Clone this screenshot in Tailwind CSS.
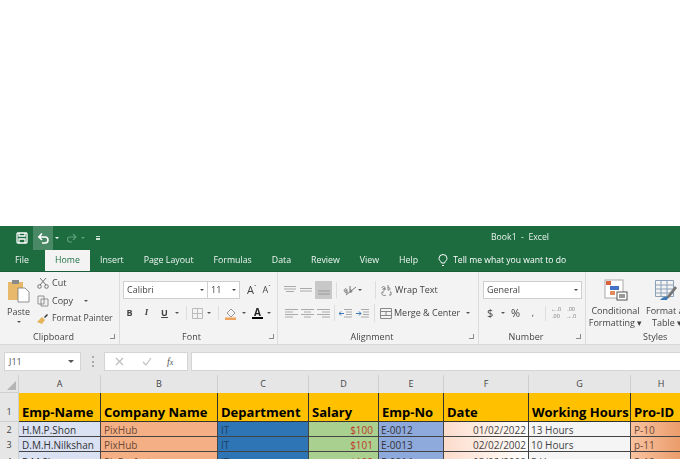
<!DOCTYPE html>
<html><head><meta charset="utf-8"><script src="https://cdn.jsdelivr.net/npm/@tailwindcss/browser@4"></script></head>
<body class="bg-white overflow-hidden">
<div class="w-[680px] h-[459px] overflow-hidden flex flex-col font-['Open_Sans',sans-serif] text-[9px] text-[#444] blur-[0.4px]">
  <div class="h-[226px] shrink-0 bg-white"></div>
  <!-- title bar -->
  <div class="h-[24px] shrink-0 bg-[#1d6c40] flex items-center text-white relative">
    <svg class="ml-[16px] w-[12px] h-[12px]" viewBox="0 0 12 12" fill="none" stroke="#fff" stroke-width="1.3"><rect x="1" y="1" width="10" height="10" rx="1"/><path d="M3 1v3h6V1M3 11V7h6v4"/></svg>
    <div class="ml-[5px] w-[20px] h-[24px] bg-white/20 flex items-center justify-center">
      <svg class="w-[13px] h-[12px]" viewBox="0 0 13 12" fill="none" stroke="#fff" stroke-width="1.6"><path d="M2 5h6a3 3 0 0 1 0 6H5M5 1.5 1.8 5 5 8"/></svg>
    </div>
    <span class="ml-[2px] w-0 h-0 border-x-[2px] border-x-transparent border-t-[2px] border-t-white"></span>
    <svg class="ml-[7px] w-[11px] h-[10px]" viewBox="0 0 11 10" fill="none" stroke="#5f9f7d" stroke-width="1.1"><path d="M9 4H4a2.5 2.5 0 0 0 0 5h2M7 1l3 3-3 3"/></svg>
    <span class="ml-[4px] w-0 h-0 border-x-[2px] border-x-transparent border-t-[2px] border-t-[#5f9f7d]"></span>
    <span class="ml-[11px] w-[4px] h-[4px] border-t border-b-2 border-[#cfe3d8]"></span>
    <span class="ml-[391px] text-[8.7px] text-[#eaf3ee] whitespace-nowrap">Book1&nbsp; -&nbsp; Excel</span>
  </div>
  <!-- tabs -->
  <div class="h-[22px] shrink-0 bg-[#1d6c40] flex items-end text-[#eef5f1] border-b border-[#1a5c38] text-[8.8px]">
    <span class="ml-[15px] h-[21px] leading-[21px]">File</span>
    <span class="ml-[16px] w-[45px] h-[22px] leading-[22px] bg-[#f3f3f3] text-[#217346] text-center">Home</span>
    <span class="ml-[10px] h-[21px] leading-[21px]">Insert</span>
    <span class="ml-[20px] h-[21px] leading-[21px]">Page Layout</span>
    <span class="ml-[20px] h-[21px] leading-[21px]">Formulas</span>
    <span class="ml-[20px] h-[21px] leading-[21px]">Data</span>
    <span class="ml-[20px] h-[21px] leading-[21px]">Review</span>
    <span class="ml-[20px] h-[21px] leading-[21px]">View</span>
    <span class="ml-[20px] h-[21px] leading-[21px]">Help</span>
    <svg class="ml-[20px] mb-[4px] w-[10px] h-[13px]" viewBox="0 0 10 13" fill="none" stroke="#fff" stroke-width="1"><path d="M3.5 9C3 7 1 6.500 1 4.500a4 4 0 0 1 8 0C9 6.500 7 7 6.500 9zM4 11.500h2"/></svg>
    <span class="ml-[5px] h-[21px] leading-[21px] text-white whitespace-nowrap text-[8.6px]">Tell me what you want to do</span>
  </div>
  <!-- ribbon -->
  <div class="h-[72px] shrink-0 bg-[#f3f3f3] flex">
    <!-- Clipboard -->
    <div class="w-[120px] shrink-0 border-r border-[#dcdcdc] flex flex-col">
      <div class="h-[58px] flex">
        <div class="w-[37px] flex flex-col items-center pt-[7px]">
          <svg class="w-[24px] h-[24px]" viewBox="0 0 24 24"><rect x="1" y="3" width="15" height="18" fill="#e8b96a"/><rect x="5" y="1" width="7" height="4" fill="#8a8a8a"/><path d="M11 9h7l4 4v10H11z" fill="#fff" stroke="#777" stroke-width=".8"/></svg>
          <span class="mt-[3px] leading-[12px]">Paste</span>
          <span class="mt-[3px] w-0 h-0 border-x-[2px] border-x-transparent border-t-[2px] border-t-[#555]"></span>
        </div>
        <div class="flex flex-col pt-[2px]">
          <div class="flex items-center h-[18px]"><svg class="w-[12px] h-[12px]" viewBox="0 0 12 12" fill="none" stroke="#666" stroke-width=".9"><path d="M3 1l6 7M9 1 3 8"/><circle cx="2.500" cy="9.500" r="1.800"/><circle cx="9.500" cy="9.500" r="1.800"/></svg><span class="ml-[3px]">Cut</span></div>
          <div class="flex items-center h-[18px]"><svg class="w-[12px] h-[12px]" viewBox="0 0 12 12" fill="none" stroke="#888" stroke-width=".9"><path d="M1 1h6v8H1zM4 4h7v7H4z"/></svg><span class="ml-[3px]">Copy</span><span class="ml-[11px] w-0 h-0 border-x-[2px] border-x-transparent border-t-[2px] border-t-[#555]"></span></div>
          <div class="flex items-center h-[18px]"><svg class="w-[12px] h-[12px]" viewBox="0 0 12 12"><path d="M0 9 5 4l3 3-3 4z" fill="#e3b45a"/><path d="M7 4l3-3 1 1-3 3z" fill="#333"/></svg><span class="ml-[3px] whitespace-nowrap text-[8.7px]">Format Painter</span></div>
        </div>
      </div>
      <div class="relative flex-1 text-center leading-[14px] pr-[12px]">Clipboard<span class="absolute right-[4px] top-[4px] w-[5px] h-[5px] border-r border-b border-[#888]"></span></div>
    </div>
    <!-- Font -->
    <div class="w-[158px] shrink-0 border-r border-[#dcdcdc] flex flex-col">
      <div class="h-[58px] pl-[3px] pt-[9px]">
        <div class="flex items-center h-[18px]">
          <div class="w-[85px] h-[18px] bg-white border border-[#cfcfcf] flex items-center justify-between px-[3px]"><span>Calibri</span><span class="w-0 h-0 border-x-[2px] border-x-transparent border-t-[2px] border-t-[#444]"></span></div>
          <div class="w-[32px] h-[18px] bg-white border border-l-0 border-[#cfcfcf] flex items-center justify-between px-[3px]"><span>11</span><span class="w-0 h-0 border-x-[2px] border-x-transparent border-t-[2px] border-t-[#444]"></span></div>
          <span class="ml-[7px] text-[11px]">A</span><span class="text-[6px] -mt-[6px]">ˆ</span>
          <span class="ml-[6px] text-[9px]">A</span><span class="text-[6px] -mt-[6px]">ˇ</span>
        </div>
        <div class="flex items-center h-[18px] mt-[5px] font-bold text-[#444]">
          <span class="w-[13px] text-center">B</span>
          <span class="ml-[2px] w-[17px] text-center italic font-['Liberation_Serif']">I</span>
          <span class="ml-[2px] w-[15px] text-center underline">U</span>
          <span class="w-0 h-0 ml-[3px] border-x-[2px] border-x-transparent border-t-[2px] border-t-[#555]"></span>
          <span class="ml-[7px] w-px h-[14px] bg-[#ddd]"></span>
          <svg class="ml-[5px] w-[11px] h-[11px]" viewBox="0 0 11 11" fill="none" stroke="#bbb"><path d="M.5.500h10v10H.5zM5.500.500v10M.5 5.500h10"/></svg>
          <span class="w-0 h-0 ml-[4px] border-x-[2px] border-x-transparent border-t-[2px] border-t-[#555]"></span>
          <span class="ml-[7px] w-px h-[14px] bg-[#ddd]"></span>
          <svg class="ml-[6px] w-[12px] h-[13px]" viewBox="0 0 12 13"><path d="M2 6l4-4 4 4-4 4z" fill="none" stroke="#999"/><rect x="0" y="10.500" width="11" height="2.500" fill="#f0a35a"/></svg>
          <span class="w-0 h-0 ml-[5px] border-x-[2px] border-x-transparent border-t-[2px] border-t-[#555]"></span>
          <div class="ml-[6px] w-[11px] flex flex-col items-center leading-[9px] text-[#222] text-[10px]">A<span class="w-[11px] h-[2px] bg-black"></span></div>
          <span class="w-0 h-0 ml-[4px] border-x-[2px] border-x-transparent border-t-[2px] border-t-[#555]"></span>
        </div>
      </div>
      <div class="relative flex-1 text-center leading-[14px] pr-[14px]">Font<span class="absolute right-[3px] top-[4px] w-[5px] h-[5px] border-r border-b border-[#888]"></span></div>
    </div>
    <!-- Alignment -->
    <div class="w-[201px] shrink-0 border-r border-[#dcdcdc] flex flex-col">
      <div class="h-[58px] pl-[6px] pt-[9px]">
        <div class="flex items-center h-[18px]">
          <svg class="w-[12px] h-[8px]" viewBox="0 0 12 8" stroke="#aaa"><path d="M0 .5h12M0 3h12M2 5.500h8"/></svg>
          <svg class="ml-[4px] w-[12px] h-[8px]" viewBox="0 0 12 8" stroke="#aaa"><path d="M0 2.500h12M0 5h12"/></svg>
          <div class="ml-[3px] w-[17px] h-[18px] bg-[#c8c8c8] flex items-end justify-center pb-[3px]"><svg class="w-[12px] h-[6px]" viewBox="0 0 12 6" stroke="#999"><path d="M0 1h12M0 4h12"/></svg></div>
          <span class="ml-[4px] w-px h-[16px] bg-[#ddd]"></span>
          <svg class="ml-[6px] w-[14px] h-[11px]" viewBox="0 0 14 11" fill="none" stroke="#777"><path d="M1 6c1-3 3-3 3 0v2M4 6c-3-1-3 2 0 2M7 1v6c2 2 3-3 0-2M3 10 13 2"/></svg>
          <span class="w-0 h-0 ml-[1px] border-x-[2px] border-x-transparent border-t-[2px] border-t-[#555]"></span>
          <span class="ml-[13px] w-px h-[18px] bg-[#ddd]"></span>
          <svg class="ml-[5px] w-[12px] h-[13px]" viewBox="0 0 12 13" fill="none" stroke="#777" stroke-width=".9"><path d="M1 4c0-2 3-2 3 0v2M4 4.500c-3-.5-3 2 0 1.500M7 1v5c2 1.500 3-3 0-2.500M3 8H1c-1 4 3 4 4 3M9 8h1v3l-2 0"/></svg>
          <span class="ml-[2px] whitespace-nowrap">Wrap Text</span>
        </div>
        <div class="flex items-center h-[18px] mt-[5px]">
          <svg class="ml-[1px] w-[13px] h-[9px]" viewBox="0 0 13 9" stroke="#aaa"><path d="M0 .5h13M0 3h8M0 5.500h13M0 8h8"/></svg>
          <svg class="ml-[3px] w-[13px] h-[9px]" viewBox="0 0 13 9" stroke="#aaa"><path d="M0 .5h13M3 3h7M0 5.500h13M3 8h7"/></svg>
          <svg class="ml-[3px] w-[13px] h-[9px]" viewBox="0 0 13 9" stroke="#aaa"><path d="M0 .5h13M5 3h8M0 5.500h13M5 8h8"/></svg>
          <span class="ml-[4px] w-px h-[16px] bg-[#ddd]"></span>
          <svg class="ml-[4px] w-[13px] h-[9px]" viewBox="0 0 13 9" fill="none"><path d="M5 .5h8M7 3h6M7 5.500h6M5 8h8" stroke="#aaa"/><path d="M5 4.500H0M2 2.500 0 4.500l2 2" stroke="#3b78b8"/></svg>
          <svg class="ml-[4px] w-[13px] h-[9px]" viewBox="0 0 13 9" fill="none"><path d="M5 .5h8M7 3h6M7 5.500h6M5 8h8" stroke="#aaa"/><path d="M0 4.500h5M3 2.500l2 2-2 2" stroke="#3b78b8"/></svg>
          <span class="ml-[5px] w-px h-[18px] bg-[#ddd]"></span>
          <svg class="ml-[5px] w-[12px] h-[11px]" viewBox="0 0 12 11" fill="none" stroke="#888"><path d="M.5.500h11v10H.5zM.5 3.500h11M.5 7.500h11M6 3.500v4"/></svg>
          <span class="ml-[2px] whitespace-nowrap">Merge &amp; Center</span>
          <span class="w-0 h-0 ml-[6px] border-x-[2px] border-x-transparent border-t-[2px] border-t-[#555]"></span>
        </div>
      </div>
      <div class="relative flex-1 text-center leading-[14px] pr-[12px]">Alignment<span class="absolute right-[4px] top-[4px] w-[5px] h-[5px] border-r border-b border-[#888]"></span></div>
    </div>
    <!-- Number -->
    <div class="w-[107px] shrink-0 border-r border-[#dcdcdc] flex flex-col">
      <div class="h-[58px] pl-[4px] pt-[9px]">
        <div class="w-[99px] h-[18px] bg-white border border-[#cfcfcf] flex items-center justify-between px-[3px]"><span>General</span><span class="w-0 h-0 border-x-[2px] border-x-transparent border-t-[2px] border-t-[#444]"></span></div>
        <div class="flex items-center h-[18px] mt-[5px] pl-[4px] text-[11px]">
          <span class="w-[8px]">$</span>
          <span class="w-0 h-0 ml-[6px] border-x-[2px] border-x-transparent border-t-[2px] border-t-[#555]"></span>
          <span class="ml-[6px] w-[14px]">%</span>
          <span class="ml-[4px] text-[9px] w-[8px] text-center">,</span>
          <span class="ml-[8px] w-px h-[15px] bg-[#ddd]"></span>
          <span class="ml-[5px] text-[5.5px] leading-[7px] text-center text-[#777]">←.0<br>.00</span>
          <span class="ml-[5px] text-[5.5px] leading-[7px] text-center text-[#777]">.00<br>→.0</span>
        </div>
      </div>
      <div class="relative flex-1 text-center leading-[14px] pr-[12px]">Number<span class="absolute right-[4px] top-[4px] w-[5px] h-[5px] border-r border-b border-[#888]"></span></div>
    </div>
    <!-- Styles -->
    <div class="flex-1 flex flex-col overflow-hidden min-w-0">
      <div class="h-[58px] flex pt-[7px] leading-[12px]">
        <div class="w-[57px] shrink-0 flex flex-col items-center pl-[2px]">
          <svg class="w-[24px] h-[22px]" viewBox="0 0 24 22"><rect x="1" y="1" width="18" height="18" fill="#fff" stroke="#aaa"/><rect x="2" y="2" width="5" height="4" fill="#d9633f"/><rect x="6" y="7" width="9" height="4" fill="#4472c4"/><rect x="6" y="12" width="5" height="4" fill="#e08a5a"/><rect x="13" y="13" width="10" height="8" fill="#fff" stroke="#555"/><path d="M15 16h6M15 18h6" stroke="#333"/></svg>
          <span class="mt-[4px]">Conditional</span>
          <span class="whitespace-nowrap">Formatting ▾</span>
        </div>
        <div class="ml-[3px] w-[50px] shrink-0 flex flex-col items-start">
          <svg class="ml-[8px] w-[24px] h-[22px]" viewBox="0 0 24 22" fill="none"><path d="M1.500 1.500h18v16h-18zM1.500 6h18M1.500 10h18M1.500 14h18M7 1.500v16M13 1.500v16" stroke="#8aa0b8"/><path d="M10 21l4-5 7-9 2 2-8 10z" fill="#777"/><path d="M6 21c2-3 6-4 8-3l-1 3z" fill="#3b78b8"/></svg>
          <span class="mt-[4px] whitespace-nowrap">Format as</span>
          <span class="ml-[6px] whitespace-nowrap">Table ▾</span>
        </div>
      </div>
      <div class="flex-1 leading-[14px] pl-[57px]">Styles</div>
    </div>
  </div>
  <!-- formula bar -->
  <div class="h-[31px] shrink-0 bg-[#e6e6e6] border-t border-[#d8d8d8] flex pt-[7px] pl-[4px]">
    <div class="w-[77px] h-[19px] bg-white border border-[#d4d4d4] flex items-center justify-between px-[4px] text-[#555]"><span>J11</span><span class="w-0 h-0 mr-[2px] border-x-[3px] border-x-transparent border-t-[3px] border-t-[#555]"></span></div>
    <span class="ml-[11px] w-[2px] h-[11px] mt-[4px] border-l-2 border-dotted border-[#aaa]"></span>
    <div class="ml-[10px] w-[84px] h-[19px] bg-white border border-[#d4d4d4] flex items-center pl-[10px] text-[#bbb]">
      <svg class="w-[9px] h-[9px]" viewBox="0 0 9 9" stroke="#bbb" stroke-width="1.1"><path d="M1 1l7 7M8 1 1 8"/></svg>
      <svg class="ml-[18px] w-[10px] h-[9px]" viewBox="0 0 10 9" fill="none" stroke="#bbb" stroke-width="1.1"><path d="M1 5l3 3 5-7"/></svg>
      <span class="ml-[15px] italic text-[#555] font-['Liberation_Serif'] text-[10px]">f<span class="text-[8px]">x</span></span>
    </div>
    <div class="ml-[3px] flex-1 h-[19px] bg-white border border-[#d4d4d4] border-r-0"></div>
  </div>
  <!-- sheet -->
  <div class="grid grid-cols-[19px_82px_117px_91px_70px_65px_85px_102px_60px] grid-rows-[18px_29px_15px_15px_15px] bg-[#e6e6e6] text-[#444] flex-1">
    <div class="relative border-r border-b border-[#cfcfcf]"><span class="absolute right-[2px] bottom-[2px] w-0 h-0 border-l-[9px] border-l-transparent border-b-[9px] border-b-[#b5b5b5]"></span></div>
    <div class="border-r border-[#cfcfcf] text-center leading-[18px]">A</div>
    <div class="border-r border-[#cfcfcf] text-center leading-[18px]">B</div>
    <div class="border-r border-[#cfcfcf] text-center leading-[18px]">C</div>
    <div class="border-r border-[#cfcfcf] text-center leading-[18px]">D</div>
    <div class="border-r border-[#cfcfcf] text-center leading-[18px]">E</div>
    <div class="border-r border-[#cfcfcf] text-center leading-[18px]">F</div>
    <div class="border-r border-[#cfcfcf] text-center leading-[18px]">G</div>
    <div class="text-center leading-[18px]">H</div>

    <div class="border-r border-b border-[#cfcfcf] text-center leading-[38px]">1</div>
    <div class="bg-[#ffc000] border-r border-b border-[#333] text-black font-bold text-[13px] leading-[38px] pl-[3px] overflow-hidden whitespace-nowrap">Emp-Name</div>
    <div class="bg-[#ffc000] border-r border-b border-[#333] text-black font-bold text-[13px] leading-[38px] pl-[3px] overflow-hidden whitespace-nowrap">Company Name</div>
    <div class="bg-[#ffc000] border-r border-b border-[#333] text-black font-bold text-[13px] leading-[38px] pl-[3px] overflow-hidden whitespace-nowrap">Department</div>
    <div class="bg-[#ffc000] border-r border-b border-[#333] text-black font-bold text-[13px] leading-[38px] pl-[3px] overflow-hidden whitespace-nowrap">Salary</div>
    <div class="bg-[#ffc000] border-r border-b border-[#333] text-black font-bold text-[13px] leading-[38px] pl-[3px] overflow-hidden whitespace-nowrap">Emp-No</div>
    <div class="bg-[#ffc000] border-r border-b border-[#333] text-black font-bold text-[13px] leading-[38px] pl-[3px] overflow-hidden whitespace-nowrap">Date</div>
    <div class="bg-[#ffc000] border-r border-b border-[#333] text-black font-bold text-[13px] leading-[38px] pl-[3px] overflow-hidden whitespace-nowrap">Working Hours</div>
    <div class="bg-[#ffc000] border-b border-[#333] text-black font-bold text-[13px] leading-[38px] pl-[3px] overflow-hidden whitespace-nowrap">Pro-ID</div>

    <div class="border-r border-[#cfcfcf] text-center leading-[16px]">2</div>
    <div class="bg-[#d9e1f2] border-r border-b border-[#444] pl-[3px] text-[10px] leading-[16px] text-[#333] overflow-hidden whitespace-nowrap">H.M.P.Shon</div>
    <div class="bg-[#f4b084] border-r border-b border-[#444] pl-[3px] text-[10px] leading-[16px] text-[#6b4a3a] overflow-hidden whitespace-nowrap">PixHub</div>
    <div class="bg-[#2e75b6] border-r border-b border-[#444] pl-[3px] text-[10px] leading-[16px] text-[#1f3f60] overflow-hidden whitespace-nowrap">IT</div>
    <div class="bg-[#a9d08e] border-r border-b border-[#444] pr-[5px] text-right text-[10px] leading-[16px] text-[#c0392b] overflow-hidden whitespace-nowrap">$100</div>
    <div class="bg-[#8ea9db] border-r border-b border-[#444] pl-[2px] text-[10px] leading-[16px] text-[#333] overflow-hidden whitespace-nowrap">E-0012</div>
    <div class="bg-linear-to-r from-[#fcdccb] to-white border-r border-b border-[#444] pr-[2px] text-right text-[10px] leading-[16px] text-[#444] overflow-hidden whitespace-nowrap">01/02/2022</div>
    <div class="bg-[#f5f5f5] border-r border-b border-[#444] pl-[2px] text-[10px] leading-[16px] text-[#444] overflow-hidden whitespace-nowrap">13 Hours</div>
    <div class="bg-linear-to-r from-[#f8c3a0] to-[#e8935f] border-b border-[#444] pl-[3px] text-[10px] leading-[16px] text-[#6b4a3a] overflow-hidden whitespace-nowrap">P-10</div>

    <div class="border-r border-[#cfcfcf] text-center leading-[16px]">3</div>
    <div class="bg-[#d9e1f2] border-r border-b border-[#444] pl-[3px] text-[10px] leading-[16px] text-[#333] overflow-hidden whitespace-nowrap">D.M.H.Nilkshan</div>
    <div class="bg-[#f4b084] border-r border-b border-[#444] pl-[3px] text-[10px] leading-[16px] text-[#6b4a3a] overflow-hidden whitespace-nowrap">PixHub</div>
    <div class="bg-[#2e75b6] border-r border-b border-[#444] pl-[3px] text-[10px] leading-[16px] text-[#1f3f60] overflow-hidden whitespace-nowrap">IT</div>
    <div class="bg-[#a9d08e] border-r border-b border-[#444] pr-[5px] text-right text-[10px] leading-[16px] text-[#c0392b] overflow-hidden whitespace-nowrap">$101</div>
    <div class="bg-[#8ea9db] border-r border-b border-[#444] pl-[2px] text-[10px] leading-[16px] text-[#333] overflow-hidden whitespace-nowrap">E-0013</div>
    <div class="bg-linear-to-r from-[#fcdccb] to-white border-r border-b border-[#444] pr-[2px] text-right text-[10px] leading-[16px] text-[#444] overflow-hidden whitespace-nowrap">02/02/2002</div>
    <div class="bg-[#f5f5f5] border-r border-b border-[#444] pl-[2px] text-[10px] leading-[16px] text-[#444] overflow-hidden whitespace-nowrap">10 Hours</div>
    <div class="bg-linear-to-r from-[#f8c3a0] to-[#e8935f] border-b border-[#444] pl-[3px] text-[10px] leading-[16px] text-[#6b4a3a] overflow-hidden whitespace-nowrap">p-11</div>

    <div class="border-r border-[#cfcfcf] text-center leading-[20px]">4</div>
    <div class="bg-[#d9e1f2] border-r border-[#444] pl-[3px] text-[10px] leading-[20px] text-[#333] overflow-hidden whitespace-nowrap">P.M.Shan</div>
    <div class="bg-[#f4b084] border-r border-[#444] pl-[3px] text-[10px] leading-[20px] text-[#6b4a3a] overflow-hidden whitespace-nowrap">PixPerfect</div>
    <div class="bg-[#2e75b6] border-r border-[#444] pl-[3px] text-[10px] leading-[20px] text-[#1f3f60] overflow-hidden whitespace-nowrap">IT</div>
    <div class="bg-[#a9d08e] border-r border-[#444] pr-[5px] text-right text-[10px] leading-[20px] text-[#c0392b] overflow-hidden whitespace-nowrap">$102</div>
    <div class="bg-[#8ea9db] border-r border-[#444] pl-[2px] text-[10px] leading-[20px] text-[#333] overflow-hidden whitespace-nowrap">E-0014</div>
    <div class="bg-linear-to-r from-[#fcdccb] to-white border-r border-[#444] pr-[2px] text-right text-[10px] leading-[20px] text-[#444] overflow-hidden whitespace-nowrap">03/02/2000</div>
    <div class="bg-[#f5f5f5] border-r border-[#444] pl-[2px] text-[10px] leading-[20px] text-[#444] overflow-hidden whitespace-nowrap">5 Hours</div>
    <div class="bg-linear-to-r from-[#f8c3a0] to-[#e8935f] pl-[3px] text-[10px] leading-[20px] text-[#6b4a3a] overflow-hidden whitespace-nowrap">P-12</div>
  </div>
</div>
</body></html>
